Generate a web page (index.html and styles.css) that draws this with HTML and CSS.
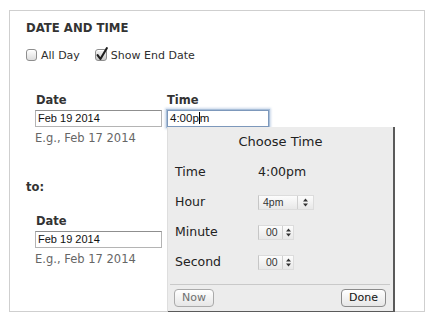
FILE: index.html
```html
<!DOCTYPE html>
<html>
<head>
<meta charset="utf-8">
<link rel="stylesheet" href="styles.css">
</head>
<body>
<div class="fieldset">
  <h2 class="legend">DATE AND TIME</h2>
  <div class="checks">
    <label class="check"><span class="box"></span>All Day</label>
    <label class="check"><span class="box"><svg class="tick" width="14" height="15" viewBox="0 0 14 15"><path d="M2.6 8.2 L5.4 12 L11.8 1.2" fill="none" stroke="#1e1e1e" stroke-width="2.1" stroke-linecap="round" stroke-linejoin="round"/></svg></span>Show End Date</label>
  </div>

  <div class="datetime">
    <div class="date-field">
      <div class="label">Date</div>
      <div class="input date-input">Feb 19 2014</div>
      <div class="hint">E.g., Feb 17 2014</div>
    </div>
    <div class="time-field">
      <div class="label">Time</div>
      <div class="input-wrap">
        <div class="input time-input">4:00p<span class="caret"></span>m</div>
        <div class="popup">
          <div class="popup-title">Choose Time</div>
          <div class="prow"><span class="plabel">Time</span><span class="pvalue">4:00pm</span></div>
          <div class="prow"><span class="plabel">Hour</span>
            <span class="sel"><span class="sel-text hour">4pm</span><span class="sel-arrow wide"><svg width="5" height="9" viewBox="0 0 5 9"><path d="M0 3.6 L2.5 0.4 L5 3.6Z M0 5.4 L2.5 8.6 L5 5.4Z" fill="#333"/></svg></span></span>
          </div>
          <div class="prow"><span class="plabel">Minute</span>
            <span class="sel"><span class="sel-text small">00</span><span class="sel-arrow"><svg width="5" height="9" viewBox="0 0 5 9"><path d="M0 3.6 L2.5 0.4 L5 3.6Z M0 5.4 L2.5 8.6 L5 5.4Z" fill="#333"/></svg></span></span>
          </div>
          <div class="prow"><span class="plabel">Second</span>
            <span class="sel"><span class="sel-text small">00</span><span class="sel-arrow"><svg width="5" height="9" viewBox="0 0 5 9"><path d="M0 3.6 L2.5 0.4 L5 3.6Z M0 5.4 L2.5 8.6 L5 5.4Z" fill="#333"/></svg></span></span>
          </div>
          <div class="psep"></div>
          <div class="pbuttons">
            <button class="btn btn-now">Now</button>
            <button class="btn btn-done">Done</button>
          </div>
        </div>
      </div>
    </div>
  </div>

  <div class="to">to:</div>

  <div class="datetime end">
    <div class="date-field">
      <div class="label">Date</div>
      <div class="input date-input">Feb 19 2014</div>
      <div class="hint">E.g., Feb 17 2014</div>
    </div>
  </div>
</div>
</body>
</html>
```

FILE: styles.css
```css
html, body {
  margin: 0;
  padding: 0;
  background: #fff;
}

body {
  font-family: "DejaVu Sans", Verdana, sans-serif;
  color: #333;
}

.fieldset {
  box-sizing: border-box;
  margin: 10px 0 0 9px;
  width: 416px;
  height: 302px;
  border: 1px solid #cfcfcf;
  padding: 10px 16px 0 16px;
}

.legend {
  margin: 0;
  font-size: 11.7px;
  line-height: 14px;
  font-weight: bold;
  color: #333;
}

.checks {
  display: flex;
  align-items: center;
  height: 14px;
  margin-top: 13px;
  font-size: 11px;
  color: #2e2e2e;
}

.check {
  display: flex;
  align-items: center;
  gap: 4px;
  margin-right: 15px;
}

.box {
  position: relative;
  box-sizing: border-box;
  width: 11px;
  height: 12px;
  border: 1px solid #8e8e8e;
  border-radius: 3px;
  background: linear-gradient(#ffffff, #dcdcdc);
  box-shadow: inset 0 1px 0 #fff;
}

.check + .check .box {
  width: 12px;
  background: linear-gradient(#f4f4f4, #c9c9c9);
}

.tick {
  position: absolute;
  left: -1px;
  top: -3px;
}

.datetime {
  display: flex;
  margin-top: 31px;
  padding-left: 9px;
}

.datetime.end {
  margin-top: 20px;
}

.date-field {
  width: 132px;
}

.time-field {
  width: 102px;
}

.label {
  font-size: 11.5px;
  line-height: 14px;
  font-weight: bold;
  color: #333;
}

.date-field .label {
  padding-left: 1px;
}

.input {
  box-sizing: border-box;
  height: 17px;
  margin-top: 3px;
  border: 1px solid #b4b4b4;
  border-top-color: #8f8f8f;
  background: #fff;
  font-family: "Liberation Sans", Arial, sans-serif;
  font-size: 11px;
  line-height: 15px;
  padding-left: 2px;
  color: #111;
  white-space: nowrap;
}

.date-input {
  width: 127px;
}

.input-wrap {
  position: relative;
  margin-top: 3px;
}

.time-input {
  margin-top: 0;
  width: 102px;
  border: 1px solid #7d98bb;
  box-shadow: 0 0 0 1px #a9bfd9, 0 0 2px 2px rgba(140, 170, 210, 0.45);
  font-size: 11.5px;
}

.caret {
  display: inline-block;
  width: 1px;
  height: 12px;
  background: #000;
  vertical-align: -2px;
}

.hint {
  margin-top: 4px;
  font-size: 11.5px;
  line-height: 14px;
  color: #666;
}

.to {
  margin-top: 35px;
  font-size: 11.5px;
  line-height: 14px;
  font-weight: bold;
  color: #333;
}

/* popup */
.popup {
  position: absolute;
  left: 0;
  top: 100%;
  z-index: 5;
  box-sizing: border-box;
  width: 228px;
  background: #ececec;
  border-left: 1px solid #dedede;
  border-right: 2px solid #5a5a5a;
  border-bottom: 3px solid #5a5a5a;
  color: #222;
  font-size: 12.5px;
}

.popup-title {
  height: 30px;
  line-height: 30px;
  text-align: center;
  font-size: 13px;
}

.prow {
  display: flex;
  align-items: center;
  height: 30px;
  padding-left: 7px;
  line-height: 30px;
}

.plabel {
  width: 83px;
}

.sel {
  display: flex;
  align-items: stretch;
  height: 15px;
  box-sizing: border-box;
  border: 1px solid #dcdcdc;
  border-left-color: #c6c6c6;
  background: linear-gradient(#fcfcfc, #e8e8e8);
  font-family: "Liberation Sans", Arial, sans-serif;
  font-size: 10.5px;
  line-height: 13px;
  color: #333;
}

.sel-text {
  box-sizing: border-box;
  border-right: 1px solid #cfcfcf;
}

.sel-text.hour {
  width: 39px;
  padding-left: 4px;
}

.sel-text.small {
  width: 24px;
  padding-left: 7px;
}

.sel-arrow {
  display: flex;
  align-items: center;
  justify-content: center;
  width: 10px;
}

.sel-arrow.wide {
  width: 15px;
}

.psep {
  margin: 7px 3px 0 2px;
  border-top: 1px solid #c9c9c9;
}

.pbuttons {
  display: flex;
  justify-content: space-between;
  padding: 4px 7px 4px 6px;
}

.btn {
  box-sizing: border-box;
  height: 18px;
  margin: 0;
  padding: 0 7px;
  border: 1px solid #9c9c9c;
  border-radius: 4px;
  background: linear-gradient(#ffffff, #e6e6e6);
  font-family: "DejaVu Sans", Verdana, sans-serif;
  font-size: 11px;
  line-height: 16px;
}

.btn-now {
  color: #6f6f6f;
  border-color: #aaaaaa;
}

.btn-done {
  color: #111;
  border-color: #8a8a8a;
}
```
